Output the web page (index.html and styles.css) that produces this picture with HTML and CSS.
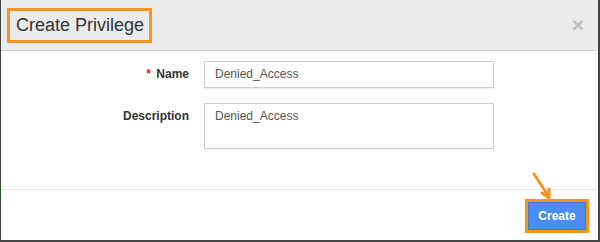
FILE: index.html
```html
<!DOCTYPE html>
<html>
<head>
<meta charset="utf-8">
<link rel="stylesheet" href="styles.css">
</head>
<body>
<div class="modal">
  <span class="edge-green"></span>
  <div class="modal-header">
    <h4 class="title">Create Privilege</h4>
    <span class="close">×</span>
  </div>
  <div class="modal-body">
    <div class="form">
      <label class="label"><span class="req">*</span> Name</label>
      <div class="input">Denied_Access</div>
      <label class="label">Description</label>
      <div class="textarea">Denied_Access</div>
    </div>
  </div>
  <div class="modal-footer">
    <div class="highlight">
      <button class="btn">Create</button>
    </div>
    <svg class="arrow" width="30" height="34" viewBox="0 0 30 34">
      <path d="M4 3 L19 26" stroke="#f7941d" stroke-width="3" stroke-linecap="round" fill="none"/>
      <path d="M12 22 L19 27 L19 18" stroke="#f7941d" stroke-width="3" stroke-linecap="round" stroke-linejoin="round" fill="none"/>
    </svg>
  </div>
</div>
</body>
</html>
```

FILE: styles.css
```css
html, body {
  margin: 0;
  padding: 0;
  background: #444;
}
body {
  font-family: "Liberation Sans", Arial, sans-serif;
  color: #333;
}
.modal {
  position: relative;
  width: 597px;
  height: 240px;
  margin-left: 1px;
  background: #fff;
  display: flex;
  flex-direction: column;
}
.edge-green {
  position: absolute;
  left: -1px;
  top: 186px;
  width: 1px;
  height: 14px;
  background: #1f5a2a;
}
.modal-header {
  height: 51px;
  background: #ebebeb;
  border-bottom: 1px solid #cfcfcf;
  box-sizing: border-box;
  display: flex;
  align-items: flex-start;
  justify-content: space-between;
  padding: 8px 0 0 6px;
}
.title {
  margin: 0;
  font-size: 18px;
  font-weight: normal;
  line-height: 21px;
  padding: 4px 5px 4px 6px;
  border: 3px solid #f7941d;
  color: #333;
}
.close {
  font-size: 21px;
  font-weight: bold;
  line-height: 21px;
  color: #bdbdbd;
  margin: 6px 14px 0 0;
}
.modal-body {
  height: 139px;
  box-sizing: border-box;
  padding-top: 10px;
  border-bottom: 1px solid #e5e5e5;
}
.form {
  display: grid;
  grid-template-columns: 188px 290px;
  column-gap: 15px;
  row-gap: 15px;
}
.label {
  text-align: right;
  font-size: 12px;
  font-weight: bold;
  line-height: 15px;
  padding-top: 6px;
  color: #333;
}
.req {
  color: #e02020;
  margin-right: 2px;
}
.input, .textarea {
  border: 1px solid #cccccc;
  box-sizing: border-box;
  font-size: 12px;
  color: #555;
  padding-left: 10px;
  box-shadow: 0 1px 1px rgba(0,0,0,0.05);
}
.input {
  height: 27px;
  line-height: 25px;
}
.textarea {
  height: 46px;
  line-height: 15px;
  padding-top: 5px;
}
.modal-footer {
  position: relative;
  flex: 1;
  display: flex;
  justify-content: flex-end;
  align-items: flex-start;
  padding: 9px 9px 0 0;
}
.highlight {
  border: 3px solid #f7941d;
  display: flex;
}
.btn {
  width: 58px;
  height: 28px;
  border: 1px solid #3f7de0;
  background: #4b8cf5;
  color: #fff;
  font-family: "Liberation Sans", Arial, sans-serif;
  font-size: 12px;
  font-weight: bold;
  padding: 0;
  margin: 0;
}
.arrow {
  position: absolute;
  left: 529px;
  top: -19px;
}
```
